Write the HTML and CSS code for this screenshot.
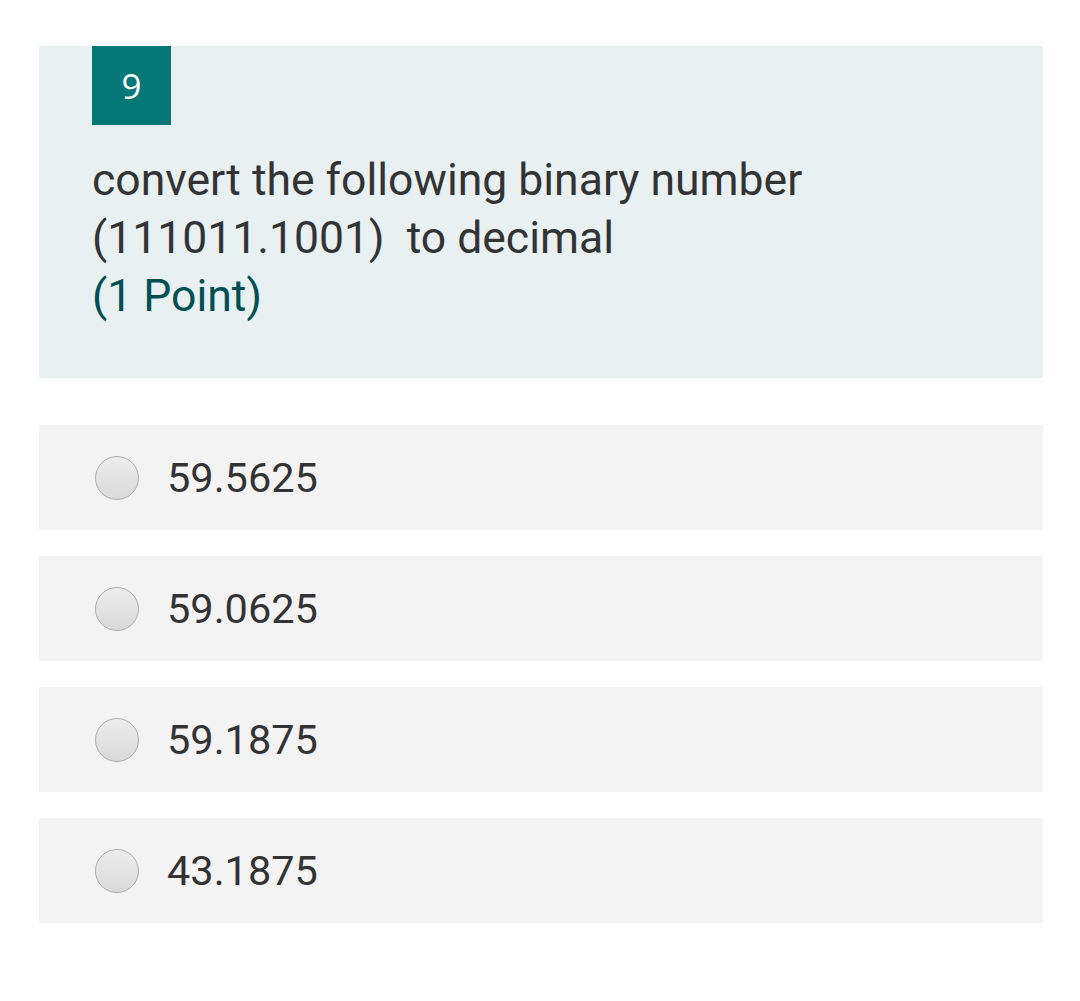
FILE: index.html
```html
<!DOCTYPE html>
<html>
<head>
<meta charset="utf-8">
<link rel="stylesheet" href="styles.css">
</head>
<body>
<div class="page">
  <div class="question">
    <div class="badge">9</div>
    <div class="qtext">
      <div>convert the following binary number</div>
      <div>(111011.1001)&nbsp; to decimal</div>
      <div class="points">(1 Point)</div>
    </div>
  </div>
  <div class="options">
    <div class="option"><span class="radio"></span><span class="label">59.5625</span></div>
    <div class="option"><span class="radio"></span><span class="label">59.0625</span></div>
    <div class="option"><span class="radio"></span><span class="label">59.1875</span></div>
    <div class="option"><span class="radio"></span><span class="label">43.1875</span></div>
  </div>
</div>
</body>
</html>
```
FILE: styles.css
```css
html, body {
  margin: 0;
  padding: 0;
  background: #ffffff;
}
.page {
  padding: 46px 37px 0 39px;
  font-family: Roboto, "Noto Sans", sans-serif;
}
.question {
  background: #e8f0f2;
  padding: 0 53px 50px 53px;
  height: 332px;
  box-sizing: border-box;
}
.badge {
  width: 79px;
  height: 79px;
  background: #067777;
  color: #ffffff;
  font-family: "Open Sans", sans-serif;
  font-size: 35px;
  display: flex;
  align-items: center;
  justify-content: center;
}
.qtext {
  margin-top: 26px;
  font-size: 44.5px;
  line-height: 58px;
  color: #333333;
}
.points {
  color: #004f52;
}
.options {
  margin-top: 47px;
  display: flex;
  flex-direction: column;
  gap: 26px;
}
.option {
  background: #f3f3f3;
  height: 105px;
  display: flex;
  align-items: center;
  padding-left: 56px;
}
.radio {
  width: 42px;
  height: 42px;
  border-radius: 50%;
  border: 1px solid #adadad;
  background: linear-gradient(#ededed, #d9d9d9);
  box-sizing: content-box;
}
.label {
  margin-left: 28px;
  font-size: 41.5px;
  color: #333333;
}
```
